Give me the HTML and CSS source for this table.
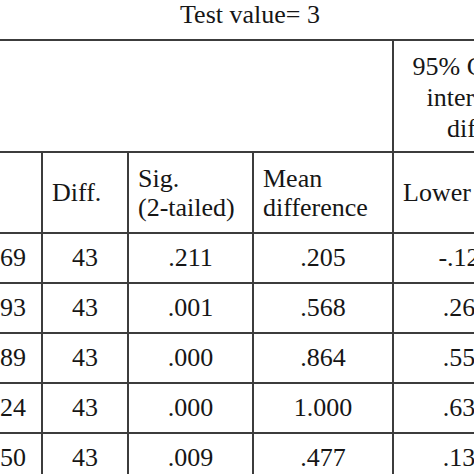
FILE: index.html
```html
<!DOCTYPE html>
<html lang="en">
<head>
<meta charset="utf-8">
<title>One-sample test</title>
<link rel="stylesheet" href="styles.css">
</head>
<body>
<div class="page">
  <div class="title">Test value= 3</div>
  <div class="grid">
    <div class="cell blank"></div>
    <div class="cell ci">95% Confidence interval of the difference</div>

    <div class="cell head"></div>
    <div class="cell head">Diff.</div>
    <div class="cell head">Sig.<br>(2-tailed)</div>
    <div class="cell head">Mean<br>difference</div>
    <div class="cell head">Lower</div>
    <div class="cell head">Upper</div>

    <div class="cell num tval">1.269</div><div class="cell num">43</div><div class="cell num">.211</div><div class="cell num">.205</div><div class="cell num">-.121</div><div class="cell num">.531</div>
    <div class="cell num tval">3.593</div><div class="cell num">43</div><div class="cell num">.001</div><div class="cell num">.568</div><div class="cell num">.261</div><div class="cell num">.875</div>
    <div class="cell num tval">6.389</div><div class="cell num">43</div><div class="cell num">.000</div><div class="cell num">.864</div><div class="cell num">.551</div><div class="cell num">1.177</div>
    <div class="cell num tval">5.824</div><div class="cell num">43</div><div class="cell num">.000</div><div class="cell num">1.000</div><div class="cell num">.631</div><div class="cell num">1.369</div>
    <div class="cell num tval">2.750</div><div class="cell num">43</div><div class="cell num">.009</div><div class="cell num">.477</div><div class="cell num">.131</div><div class="cell num">.823</div>
  </div>
</div>
</body>
</html>
```
FILE: styles.css
```css
html, body {
  margin: 0;
  padding: 0;
  background: #ffffff;
}
body {
  width: 474px;
  height: 474px;
  overflow: hidden;
  font-family: "Liberation Serif", "Times New Roman", serif;
  font-size: 26px;
  color: #161616;
}
.page {
  width: 474px;
  overflow: hidden;
}
.title {
  height: 39px;
  line-height: 30px;
  padding-left: 26px;
  text-align: center;
  white-space: nowrap;
}
.grid {
  display: grid;
  grid-template-columns: 101px 84px 123px 138px 143px 64px;
  grid-template-rows: 110px 79px repeat(5, 48px);
  gap: 2px;
  padding-top: 2px;
  margin-left: -60px;
  width: 663px;
  background: #3c3c3c;
}
.cell {
  background: #ffffff;
  display: flex;
  align-items: center;
  white-space: nowrap;
}
.blank {
  grid-column: 1 / 5;
}
.ci {
  grid-column: 5 / 7;
  justify-content: center;
  text-align: center;
  white-space: normal;
  line-height: 31px;
  padding: 2px 14px 0 16px;
}
.head {
  line-height: 29px;
  padding-left: 9px;
}
.num {
  justify-content: center;
}
.tval {
  justify-content: flex-end;
  padding-right: 15px;
}
```
